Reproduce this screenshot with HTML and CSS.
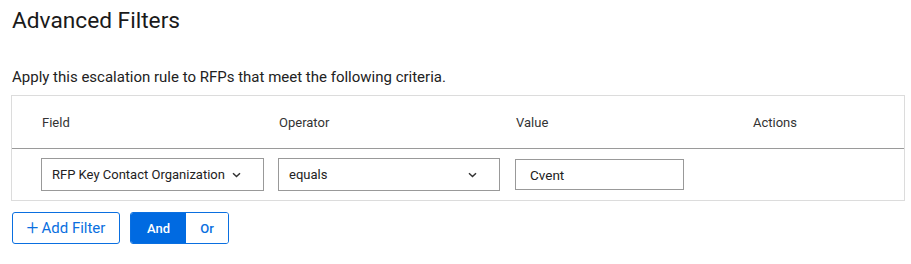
FILE: index.html
```html
<!DOCTYPE html>
<html>
<head>
<meta charset="utf-8">
<link rel="stylesheet" href="styles.css">
</head>
<body>
<div class="page">
  <h1 class="title">Advanced Filters</h1>
  <p class="desc">Apply this escalation rule to RFPs that meet the following criteria.</p>
  <div class="table">
    <div class="row head">
      <div class="cell">Field</div>
      <div class="cell">Operator</div>
      <div class="cell">Value</div>
      <div class="cell">Actions</div>
    </div>
    <div class="row body">
      <div class="cell">
        <div class="select sel1"><span>RFP Key Contact Organization</span>
          <svg class="chev" width="9" height="6" viewBox="0 0 9 6"><path d="M1 1.2 L4.5 4.5 L8 1.2" fill="none" stroke="#333" stroke-width="1.5"/></svg>
        </div>
      </div>
      <div class="cell">
        <div class="select sel2"><span>equals</span>
          <svg class="chev" width="9" height="6" viewBox="0 0 9 6"><path d="M1 1.2 L4.5 4.5 L8 1.2" fill="none" stroke="#333" stroke-width="1.5"/></svg>
        </div>
      </div>
      <div class="cell">
        <div class="input">Cvent</div>
      </div>
      <div class="cell"></div>
    </div>
  </div>
  <div class="actions">
    <button class="btn add"><span class="plus">+</span>Add Filter</button>
    <div class="toggle">
      <button class="seg on">And</button>
      <button class="seg">Or</button>
    </div>
  </div>
</div>
</body>
</html>
```
FILE: styles.css
```css
* { box-sizing: border-box; }
html, body { margin: 0; padding: 0; background: #fff; }
body { font-family: Roboto, "Noto Sans", sans-serif; color: #1f1f1f; }
.page { padding: 7px 7px 0 11px; width: 911px; }
.title { margin: 0 0 0 1px; font-size: 22.7px; font-weight: 400; line-height: 28px; color: #1a1a1a; }
.desc { margin: 33px 0 9px 1px; font-size: 15px; line-height: 18px; color: #222; }
.table { border: 1px solid #dcdcdc; width: 894px; }
.row { display: grid; grid-template-columns: 237px 237px 237px 1fr; padding-left: 29px; }
.head { height: 53px; align-items: center; border-bottom: 1px solid #9a9a9a; font-size: 13px; color: #333; padding-top: 1px; }
.head .cell { padding-left: 1px; }
.body { height: 51px; align-items: center; }
.select { height: 33px; border: 1px solid #999; display: flex; align-items: center; padding: 0 22px 0 10px; font-size: 13px; color: #222; justify-content: space-between; }
.sel1 { width: 223px; }
.sel2 { width: 222px; }
.chev { flex: none; margin-top: 1px; }
.input { width: 169px; height: 31px; border: 1px solid #999; display: flex; align-items: center; padding-left: 14px; font-size: 13.5px; color: #222; }
.actions { display: flex; gap: 10px; margin-top: 11px; padding-left: 1px; }
.btn { font-family: inherit; }
.add { height: 32px; width: 108px; border: 1px solid #0a6fe0; border-radius: 3px; background: #fff; color: #0a6fe0; font-size: 15px; display: flex; align-items: center; justify-content: center; padding: 0; gap: 3px; }
.plus { font-size: 21px; font-weight: 300; line-height: 1; margin-top: -2px; }
.toggle { display: flex; height: 32px; border: 1px solid #0a6fe0; border-radius: 3px; overflow: hidden; }
.seg { font-family: inherit; border: 0; padding: 0; background: #fff; color: #0a6fe0; font-size: 13px; font-weight: 500; }
.seg.on { background: #006ae1; color: #fff; width: 55px; }
.seg:last-child { width: 42px; }
```
